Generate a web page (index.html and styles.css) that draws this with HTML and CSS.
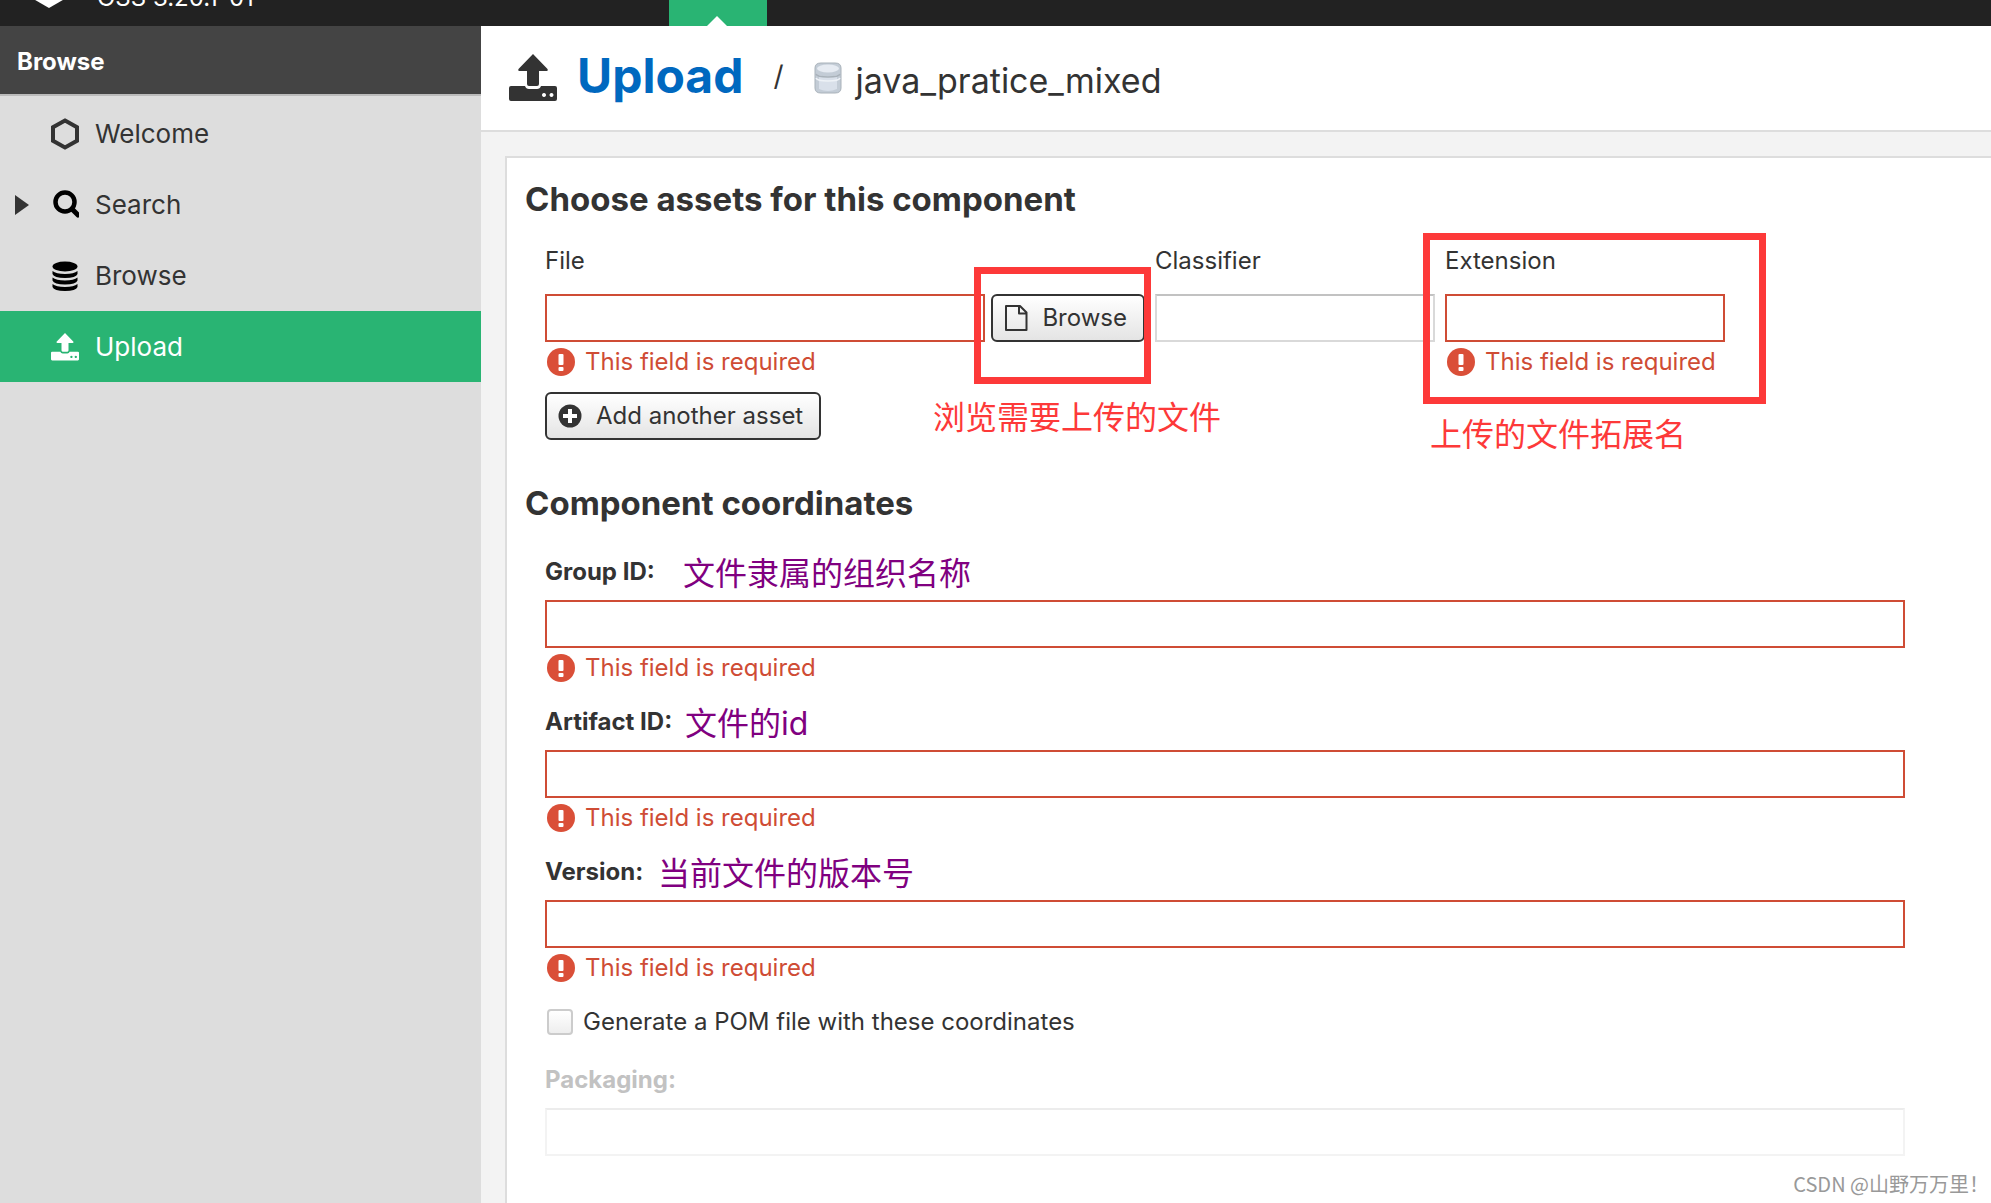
FILE: index.html
```html
<!DOCTYPE html>
<html lang="en">
<head>
    <meta charset="UTF-8">
    <meta name="viewport" content="width=device-width, initial-scale=1.0">
    <title>Upload - Nexus Repository Manager</title>
    <link rel="stylesheet" href="styles.css">
</head>
<body>
    <!-- Shared icons -->
    <svg class="sprite" aria-hidden="true">
        <symbol id="icon-upload" viewBox="0 0 48 48">
            <path d="M24 0 L38.500 15 Q39.500 17 37 17 H30 V30 Q30 32 28 32 H20 Q18 32 18 30 V17 H11 Q8.500 17 9.500 15 Z"/>
            <path fill-rule="evenodd" d="M2 32 H16 Q17 35 20 35 H28 Q31 35 32 32 H46 Q48 32 48 34 V45 Q48 47 46 47 H2 Q0 47 0 45 V34 Q0 32 2 32 Z M35 39 a2 2 0 1 0 0.010 0 Z M42.500 39 a2 2 0 1 0 0.010 0 Z"/>
        </symbol>
        <symbol id="icon-error" viewBox="0 0 28 28">
            <circle cx="14" cy="14" r="14" fill="#da4f38"/>
            <rect x="11.500" y="6" width="5" height="11" rx="1" fill="#fff"/>
            <rect x="11.500" y="19" width="5" height="4" rx="1" fill="#fff"/>
        </symbol>
    </svg>

    <header class="topbar">
        <svg class="logo" viewBox="0 0 52 60"><path fill="#fff" d="M26 0 L52 15 V45 L26 60 L0 45 V15 Z"/><path fill="#222" d="M26 14 L39 22 V38 L26 51 L13 38 V22 Z"/></svg>
        <span class="version">OSS 3.20.1-01</span>
        <span class="mode"></span>
    </header>

    <div class="layout">
        <nav class="sidebar">
            <h2 class="sidebar-title">Browse</h2>
            <ul class="menu">
                <li><a href="#" class="menu-item">
                    <svg class="menu-icon" viewBox="0 0 28 32"><path fill="none" stroke="#333" stroke-width="4" d="M14 2.500 L26 9.200 V22.800 L14 29.500 L2 22.800 V9.200 Z"/></svg>
                    Welcome
                </a></li>
                <li><a href="#" class="menu-item">
                    <span class="arrow"></span>
                    <svg class="menu-icon" viewBox="0 0 28 32"><circle cx="14" cy="13" r="9.500" fill="none" stroke="#000" stroke-width="4.500"/><path stroke="#000" stroke-width="5" stroke-linecap="round" d="M21 20 L27 26"/></svg>
                    Search
                </a></li>
                <li><a href="#" class="menu-item">
                    <svg class="menu-icon" viewBox="0 0 28 32"><ellipse cx="14" cy="6.500" rx="12.500" ry="5"/><path d="M1.500 11 Q5 14 14 14 T26.500 11 V14 Q25 18 14 18 T1.500 14 Z M1.500 17.500 Q5 20.500 14 20.500 T26.500 17.500 V20.500 Q25 24.500 14 24.500 T1.500 20.500 Z M1.500 24 Q5 27 14 27 T26.500 24 V27 Q25 31 14 31 T1.500 27 Z"/></svg>
                    Browse
                </a></li>
                <li><a href="#" class="menu-item active">
                    <svg class="menu-icon"><use href="#icon-upload"/></svg>
                    Upload
                </a></li>
            </ul>
        </nav>

        <main class="main">
            <div class="breadcrumb">
                <svg class="title-icon"><use href="#icon-upload"/></svg>
                <h1><a href="#">Upload</a></h1>
                <span class="slash">/</span>
                <svg class="repo-icon" viewBox="0 0 28 32">
                    <path fill="#c3ccd6" stroke="#a9b2ba" d="M1 6 Q1 1 7 1 H21 Q27 1 27 6 V26 Q27 31 21 31 H7 Q1 31 1 26 Z"/>
                    <path fill="#d9e0ea" d="M5 13 Q14 16 23 13 V27 Q14 31 5 27 Z"/>
                    <ellipse cx="14" cy="6.500" rx="11" ry="4" fill="#e6ebf2"/>
                    <path fill="none" stroke="#a9b2ba" stroke-width="1.500" d="M2 12 Q3 15 14 15 T26 12"/>
                    <path fill="none" stroke="#eef2f7" stroke-width="1.500" d="M2 16 Q3 19 14 19 T26 16"/>
                </svg>
                <span class="repo">java_pratice_mixed</span>
            </div>

            <form class="panel">
                <h3>Choose assets for this component</h3>
                <div class="assets">
                    <div class="asset-file">
                        <label for="file">File</label>
                        <div class="file-row">
                            <input type="text" id="file" class="invalid">
                            <button type="button" class="btn">
                                <svg class="btn-icon" viewBox="0 0 24 28"><path fill="none" stroke="#333" stroke-width="2" stroke-linejoin="round" d="M2 2 H16 L22.500 8.500 V26 H2 Z M15 2 V9.500 H22.500"/></svg>
                                Browse
                            </button>
                        </div>
                        <p class="error"><svg><use href="#icon-error"/></svg>This field is required</p>
                    </div>
                    <div class="asset-field">
                        <label for="classifier">Classifier</label>
                        <input type="text" id="classifier">
                    </div>
                    <div class="asset-field">
                        <label for="extension">Extension</label>
                        <input type="text" id="extension" class="invalid">
                        <p class="error"><svg><use href="#icon-error"/></svg>This field is required</p>
                    </div>
                    <div class="mark mark-browse"><span>浏览需要上传的文件</span></div>
                    <div class="mark mark-extension"><span>上传的文件拓展名</span></div>
                </div>
                <button type="button" class="btn add">
                    <svg class="btn-icon" viewBox="0 0 24 24"><circle cx="12" cy="12" r="11.500" fill="#333"/><path stroke="#fff" stroke-width="4" d="M12 5 V19 M5 12 H19"/></svg>
                    Add another asset
                </button>

                <h3 class="coordinates">Component coordinates</h3>
                <div class="field">
                    <label for="group">Group ID:</label>
                    <span class="note note-group">文件隶属的组织名称</span>
                    <input type="text" id="group" class="invalid">
                    <p class="error"><svg><use href="#icon-error"/></svg>This field is required</p>
                </div>
                <div class="field">
                    <label for="artifact">Artifact ID:</label>
                    <span class="note note-artifact">文件的id</span>
                    <input type="text" id="artifact" class="invalid">
                    <p class="error"><svg><use href="#icon-error"/></svg>This field is required</p>
                </div>
                <div class="field">
                    <label for="version">Version:</label>
                    <span class="note note-version">当前文件的版本号</span>
                    <input type="text" id="version" class="invalid">
                    <p class="error"><svg><use href="#icon-error"/></svg>This field is required</p>
                </div>
                <div class="check">
                    <input type="checkbox" id="pom">
                    <label for="pom">Generate a POM file with these coordinates</label>
                </div>
                <div class="field disabled">
                    <label for="packaging">Packaging:</label>
                    <input type="text" id="packaging" disabled>
                </div>
            </form>
        </main>
    </div>
    <div class="watermark">CSDN @山野万万里！</div>
</body>
</html>
```
FILE: styles.css
```css
* {
    margin: 0;
    padding: 0;
    box-sizing: border-box;
}

body {
    display: flex;
    flex-direction: column;
    height: 100vh;
    overflow: hidden;
    font-family: Inter, "Noto Sans CJK SC", sans-serif;
    font-size: 24px;
    line-height: 32px;
    color: #333;
    background: #f3f3f3;
}

a {
    color: inherit;
    text-decoration: none;
}

.sprite {
    position: absolute;
    width: 0;
    height: 0;
}

/* Top bar */
.topbar {
    position: relative;
    display: flex;
    align-items: flex-end;
    flex: none;
    gap: 22px;
    height: 26px;
    padding-left: 23px;
    background: #222;
    color: #fff;
    overflow: hidden;
}

.logo {
    flex: none;
    width: 52px;
    height: 60px;
    margin-bottom: 18px;
}

.version {
    margin-bottom: 12px;
}

.mode {
    position: absolute;
    left: 669px;
    width: 98px;
    height: 26px;
    background: #29b473;
}

.mode::after {
    content: "";
    position: absolute;
    left: 38px;
    bottom: 0;
    border: 10px solid transparent;
    border-top: 0;
    border-bottom-color: #fff;
}

.layout {
    display: flex;
    flex: 1;
    min-height: 0;
}

/* Sidebar */
.sidebar {
    flex: none;
    width: 481px;
    background: #ddd;
}

.sidebar-title {
    height: 70px;
    padding: 20px 17px 16px;
    border-bottom: 2px solid #bbb;
    background: #444;
    color: #fff;
    font-size: 24px;
}

.menu {
    padding-top: 2px;
    list-style: none;
}

.menu-item {
    position: relative;
    display: flex;
    align-items: center;
    gap: 16px;
    height: 71px;
    padding-left: 51px;
    font-size: 26px;
}

.menu-icon {
    width: 28px;
    height: 32px;
}

.menu-item.active {
    background: #29b473;
    color: #fff;
    fill: #fff;
}

.arrow {
    position: absolute;
    left: 15px;
    border: 10px solid transparent;
    border-right: 0;
    border-left: 14px solid #333;
}

/* Page header */
.main {
    display: flex;
    flex: 1;
    flex-direction: column;
    min-width: 0;
}

.breadcrumb {
    display: flex;
    flex: none;
    align-items: center;
    height: 106px;
    padding-left: 28px;
    border-bottom: 2px solid #ddd;
    background: #fff;
    white-space: nowrap;
}

.title-icon {
    width: 48px;
    height: 48px;
    margin-right: 20px;
    fill: #333;
}

h1 {
    margin-right: 30px;
    padding-bottom: 4px;
    color: #0068bf;
    font-size: 48px;
}

.slash {
    margin-right: 30px;
    padding-bottom: 4px;
    font-size: 28px;
}

.repo-icon {
    width: 28px;
    height: 32px;
    margin-right: 14px;
}

.repo {
    padding-top: 6px;
    font-size: 34px;
}

/* Upload form */
.panel {
    flex: 1;
    margin: 24px 0 0 24px;
    padding: 25px 86px 0 38px;
    border: 2px solid #ddd;
    border-width: 2px 0 0 2px;
    background: #fff;
}

h3 {
    margin-left: -20px;
    font-size: 33px;
    line-height: 32px;
}

label {
    display: block;
}

input[type="text"] {
    display: block;
    width: 100%;
    height: 48px;
    padding: 0 12px;
    border: 2px solid #d9d9d9;
    border-top-color: #c2c2c2;
    background: #fff;
    color: #333;
    font: inherit;
}

input[type="text"].invalid {
    border-color: #cf4c35;
}

.error {
    display: flex;
    align-items: center;
    gap: 10px;
    height: 32px;
    margin-top: 4px;
    padding-left: 2px;
    color: #cf4c35;
    white-space: nowrap;
}

.error svg {
    width: 28px;
    height: 28px;
}

.assets {
    position: relative;
    display: flex;
    gap: 10px;
    margin-top: 30px;
}

.assets label {
    margin-bottom: 17px;
}

.asset-file {
    width: 600px;
}

.asset-field {
    width: 280px;
}

.file-row {
    display: flex;
    gap: 6px;
}

.btn {
    display: flex;
    flex: none;
    align-items: center;
    gap: 14px;
    height: 48px;
    padding: 0 16px 0 11px;
    border: 2px solid #333;
    border-radius: 6px;
    background: linear-gradient(#fff, #e4e4e4);
    color: #333;
    font: inherit;
}

.btn-icon {
    width: 24px;
    height: 28px;
}

.add {
    margin-top: 14px;
}

.coordinates {
    margin-top: 47px;
    margin-bottom: 37px;
}

.field {
    position: relative;
    height: 150px;
}

.field label {
    margin-bottom: 12px;
    font-weight: bold;
}

.check {
    display: flex;
    align-items: center;
    gap: 10px;
    padding-left: 2px;
}

.check input {
    appearance: none;
    width: 26px;
    height: 26px;
    border: 2px solid #ccc;
    border-radius: 4px;
    background: linear-gradient(#fff, #eee);
}

.disabled {
    margin-top: 26px;
}

.disabled label {
    color: #c2c2c2;
}

.disabled input[type="text"] {
    border-color: #f3f3f3;
    border-top-color: #ececec;
}

/* Annotations drawn over the form */
.mark {
    position: absolute;
    border: 7px solid #fd3939;
    color: #fd3939;
    font-size: 32px;
    white-space: nowrap;
}

.mark span {
    position: absolute;
}

.mark-browse {
    left: 429px;
    top: 22px;
    width: 177px;
    height: 117px;
}

.mark-browse span {
    right: -77px;
    top: 128px;
}

.mark-extension {
    left: 878px;
    top: -12px;
    width: 343px;
    height: 171px;
}

.mark-extension span {
    left: 0;
    top: 179px;
}

.note {
    position: absolute;
    top: 2px;
    color: #800080;
    font-size: 32px;
}

.note-group {
    left: 138px;
}

.note-artifact {
    left: 140px;
}

.note-version {
    left: 113px;
}

.watermark {
    position: absolute;
    right: 2px;
    bottom: 3px;
    color: #999;
    font-family: "Noto Sans CJK SC", sans-serif;
    font-size: 20px;
    text-shadow: -1px -1px 0 #fff;
}
```
